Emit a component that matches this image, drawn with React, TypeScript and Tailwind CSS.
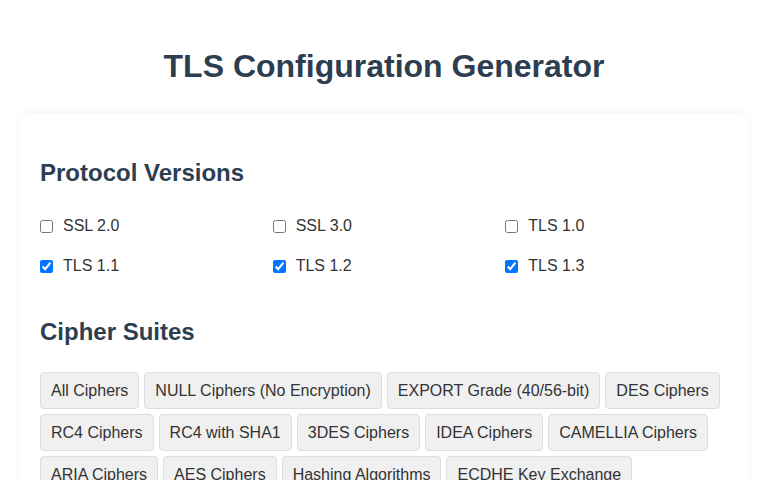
import React from "react";

const protocols = [
  { name: "SSL 2.0", checked: false },
  { name: "SSL 3.0", checked: false },
  { name: "TLS 1.0", checked: false },
  { name: "TLS 1.1", checked: true },
  { name: "TLS 1.2", checked: true },
  { name: "TLS 1.3", checked: true },
];

const ciphers = [
  "All Ciphers",
  "NULL Ciphers (No Encryption)",
  "EXPORT Grade (40/56-bit)",
  "DES Ciphers",
  "RC4 Ciphers",
  "RC4 with SHA1",
  "3DES Ciphers",
  "IDEA Ciphers",
  "CAMELLIA Ciphers",
  "ARIA Ciphers",
  "AES Ciphers",
  "Hashing Algorithms",
  "ECDHE Key Exchange",
  "DHE Key Exchange",
  "RSA Key Exchange",
];

export default function App() {
  return (
    <div
      className="min-h-screen bg-white p-5 text-[#333]"
      style={{ fontFamily: '"Liberation Sans", Arial, sans-serif' }}
    >
      <h1 className="mt-[28px] mb-[29px] text-center text-[32px] font-bold leading-[37px] text-[#2c3e50]">
        TLS Configuration Generator
      </h1>

      <div className="rounded-lg bg-white px-5 pt-[45px] pb-5 shadow-[0_0_10px_rgba(0,0,0,0.06)]">
        {/* Protocol versions */}
        <h2 className="mb-[30px] text-[24px] font-bold leading-[28px] text-[#2c3e50]">
          Protocol Versions
        </h2>
        <div className="grid grid-cols-3 gap-x-[10px] gap-y-[22px]">
          {protocols.map((p) => (
            <label key={p.name} className="flex items-center gap-[10px] text-base leading-[18px]">
              <input
                type="checkbox"
                defaultChecked={p.checked}
                className="m-0 h-[13px] w-[13px]"
              />
              <span>{p.name}</span>
            </label>
          ))}
        </div>

        {/* Cipher suites */}
        <h2 className="mt-[43px] mb-[26px] text-[24px] font-bold leading-[28px] text-[#2c3e50]">
          Cipher Suites
        </h2>
        <div className="flex flex-wrap gap-x-[5px] gap-y-[5px]">
          {ciphers.map((c) => (
            <button
              key={c}
              className="rounded border border-[#ddd] bg-[#f0f0f0] px-[10px] py-[8px] text-base leading-[19px] text-[#333]"
            >
              {c}
            </button>
          ))}
        </div>
      </div>
    </div>
  );
}
